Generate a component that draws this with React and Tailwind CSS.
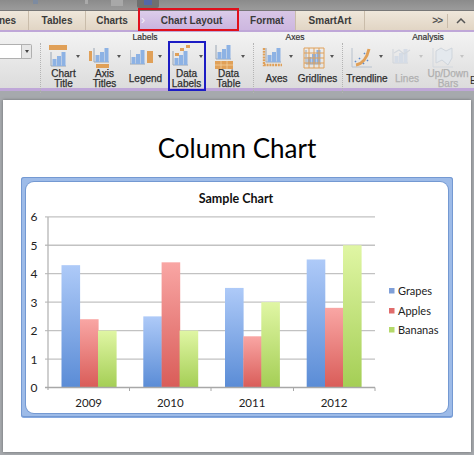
const lato = { fontFamily: "Lato, sans-serif" };

const series = [
  { id: "blue", values: [4.3, 2.5, 3.5, 4.5], xs: [61.5, 143.3, 225, 306.7] },
  { id: "red", values: [2.4, 4.4, 1.8, 2.8], xs: [80, 161.6, 243.3, 325] },
  { id: "green", values: [2, 2, 3, 5], xs: [98, 179.6, 261.3, 343] },
];

function ColumnChart() {
  // coordinates are page pixels, shifted into the frame's content box
  const y = (v) => 387.5 - v * 28.45;
  return (
    <svg width="422" height="231" viewBox="26 182 422 231" className="block">
      <defs>
        <linearGradient id="blue" x1="0" y1="0" x2="0" y2="1">
          <stop offset="0" stopColor="#aecaf8" />
          <stop offset="1" stopColor="#5a8cd6" />
        </linearGradient>
        <linearGradient id="red" x1="0" y1="0" x2="0" y2="1">
          <stop offset="0" stopColor="#f9a6a4" />
          <stop offset="1" stopColor="#d95c58" />
        </linearGradient>
        <linearGradient id="green" x1="0" y1="0" x2="0" y2="1">
          <stop offset="0" stopColor="#e0f6a4" />
          <stop offset="1" stopColor="#a4ce55" />
        </linearGradient>
      </defs>
      <text x="236" y="203" textAnchor="middle" fontSize="12.5" fontWeight="700" fill="#111" style={lato}>
        Sample Chart
      </text>
      {[1, 2, 3, 4, 5, 6].map((v) => (
        <line key={v} x1="45" x2="375" y1={y(v)} y2={y(v)} stroke="#c2c2c2" strokeWidth="1.3" />
      ))}
      {[0, 1, 2, 3, 4, 5, 6].map((v) => (
        <text key={v} x="34" y={y(v) + 4.5} textAnchor="middle" fontSize="12" fill="#222" style={lato}>
          {v}
        </text>
      ))}
      {series.map((s) =>
        s.values.map((v, i) => (
          <rect key={s.id + i} x={s.xs[i]} y={y(v)} width="18.6" height={v * 28.45} fill={`url(#${s.id})`} />
        ))
      )}
      <line x1="48" x2="48" y1="217" y2="390" stroke="#b5b5b5" strokeWidth="1.3" />
      <line x1="45" x2="375" y1="387.5" y2="387.5" stroke="#a8a8a8" strokeWidth="1.3" />
      {[129.5, 211, 293.5, 375].map((x) => (
        <line key={x} x1={x} x2={x} y1="387.5" y2="391" stroke="#a8a8a8" strokeWidth="1" />
      ))}
      {[
        ["2009", 88.7],
        ["2010", 170.3],
        ["2011", 252],
        ["2012", 334],
      ].map(([t, x]) => (
        <text key={t} x={x} y="407" textAnchor="middle" fontSize="11.5" fill="#222" style={lato}>
          {t}
        </text>
      ))}
      {[
        ["Grapes", 291, "#7f9fd8"],
        ["Apples", 311, "#e06c6c"],
        ["Bananas", 330, "#b4d96a"],
      ].map(([t, ly, c]) => (
        <g key={t}>
          <rect x="389" y={ly - 3} width="5.5" height="5.5" fill={c} />
          <text x="398" y={ly + 4} fontSize="11" fill="#222" style={lato}>
            {t}
          </text>
        </g>
      ))}
    </svg>
  );
}

function Bars({ x = 5, y = 7, muted }) {
  const c = muted ? "#d5dce6" : "#8db2e4";
  return (
    <g>
      <path d={`M${x} ${y}v14h15`} fill="none" stroke={muted ? "#cfd4da" : "#9aa6b4"} strokeWidth="1" />
      <rect x={x + 1.5} y={y + 7} width="4" height="7" fill={c} />
      <rect x={x + 6} y={y + 4} width="4" height="10" fill={c} />
      <rect x={x + 10.5} y={y} width="4" height="14" fill={c} />
    </g>
  );
}

const orange = "#e0a058";

const icons = {
  title: (
    <>
      <rect x="1" y="0" width="18" height="5" fill={orange} />
      <Bars x={3} y={7} />
    </>
  ),
  axis: (
    <>
      <rect x="0" y="6" width="3" height="10" fill={orange} />
      <Bars x={5} y={3} />
      <rect x="7" y="19" width="13" height="4" fill={orange} />
    </>
  ),
  legend: (
    <>
      <Bars x={0} y={5} />
      <rect x="17" y="6" width="6" height="12" fill={orange} />
    </>
  ),
  labels: (
    <>
      <rect x="15" y="0" width="4" height="3" fill={orange} />
      <rect x="9" y="3" width="4" height="3" fill={orange} />
      <rect x="4" y="8" width="4" height="3" fill={orange} />
      <Bars x={2} y={6} />
    </>
  ),
  table: (
    <>
      <Bars x={3} y={0} />
      <rect x="2" y="16" width="18" height="8" fill={orange} />
      <path d="M2 20h18M8 16v8M14 16v8" stroke="#f4d6a8" strokeWidth="0.7" />
    </>
  ),
  axes: (
    <>
      <Bars x={5} y={3} />
      <path d="M3 3v17h18" fill="none" stroke={orange} strokeWidth="2.4" strokeDasharray="2 0.8" />
    </>
  ),
  grid: (
    <>
      <Bars x={4} y={5} />
      <path d="M2 3h20M2 8h20M2 13h20M2 18h20M2 23h20M2 3v20M7 3v20M12 3v20M17 3v20M22 3v20" fill="none" stroke={orange} strokeWidth="1" />
    </>
  ),
  trend: (
    <>
      <path d="M1 3v19h20" fill="none" stroke="#b8c2ce" strokeWidth="1" />
      <path d="M5 20C11 19 16 13 18 4" fill="none" stroke={orange} strokeWidth="3" />
      <path d="M4 16l1 1M8 13l1 1M12 18l1 1M16 15l1 1M13 8l1 1" stroke="#5d88c8" strokeWidth="1.6" />
    </>
  ),
  lines: (
    <>
      <Bars x={2} y={4} muted />
      <path d="M3 8l5 -3l5 4l6 -4" fill="none" stroke="#d3d8de" strokeWidth="1.2" />
    </>
  ),
  updown: (
    <>
      <path d="M1 3v19h20" fill="none" stroke="#d3d8de" strokeWidth="1" />
      <path d="M4 6l5 -3l5 3l6 -3v10l-4 7l-6 -5l-6 3z" fill="#e4e9ee" stroke="#cfd5dc" strokeWidth="1" />
    </>
  ),
};

function RibbonButton({ icon, label, w, muted, selected }) {
  return (
    <div className="relative flex flex-col items-center shrink-0 h-[46px]" style={{ width: w }}>
      <div className="flex items-center gap-[4px] h-[25px] mt-px">
        <svg width="24" height="24" viewBox="0 0 24 24" className="block">
          {icons[icon]}
        </svg>
        <span
          className={`w-0 h-0 border-x-[2.5px] border-x-transparent border-t-[3px] ${muted ? "border-t-[#c4c4c4]" : "border-t-[#555]"}`}
        />
      </div>
      <div
        className={`flex-1 flex items-center text-center text-[10px] leading-[10px] [-webkit-text-stroke:0.25px] ${muted ? "text-[#b0b0b0]" : "text-[#2e2e2e]"}`}
      >
        <span>{label}</span>
      </div>
      {selected && <span className="absolute left-[2px] right-[1px] -top-[2px] -bottom-[2px] border-[2.5px] border-[#1c1cc4]" />}
    </div>
  );
}

function Tab({ w, children, purple, active, last }) {
  const bg = active
    ? "bg-gradient-to-b from-[#dccdea] to-[#c9b2de]"
    : purple
      ? "bg-gradient-to-b from-[#d8c6e6] to-[#cdb7e0]"
      : "bg-gradient-to-b from-[#efe7db] to-[#e1d5c4]";
  return (
    <div
      className={`relative shrink-0 h-full flex items-center justify-center text-[10px] font-bold text-[#3b3b3b] ${bg} ${last ? "" : "border-r border-[#c9bcaa]"}`}
      style={{ width: w }}
    >
      {children}
    </div>
  );
}

function Sep() {
  return <div className="w-0 h-[50px] shrink-0 border-l border-dotted border-[#b4b4b4]" />;
}

function GroupTitle({ w, children }) {
  return (
    <div className="text-center text-[8.5px] text-[#333] [-webkit-text-stroke:0.2px] shrink-0" style={{ width: w }}>
      {children}
    </div>
  );
}

function Handle({ className }) {
  return <span className={`absolute w-[5px] h-[5px] bg-[radial-gradient(#5f7fb2_35%,transparent_40%)] bg-[length:2px_2px] ${className}`} />;
}

export default function App() {
  return (
    <div className="w-[474px] h-[455px] overflow-hidden bg-[#a6a9ad] flex flex-col" style={{ fontFamily: "'Liberation Sans', Arial, sans-serif" }}>
      {/* window top */}
      <div className="h-[11px] shrink-0 bg-gradient-to-b from-[#8b8b8b] to-[#9b9b9b] border-b border-[#777] flex items-start">
        <div className="ml-[33px] w-[5px] h-[4px] bg-[#7d8ba0]" />
        <div className="ml-[47px] w-[3px] h-[4px] bg-[#aaa]" />
        <div className="ml-[23px] w-[12px] h-[6px] bg-[#a8a8a8]" />
        <div className="ml-[14px] w-[22px] h-[8px] rounded-b-[2px] bg-[#6f6f6f] flex justify-center">
          <div className="w-[8px] h-[5px] bg-[#5468a8]" />
        </div>
      </div>

      {/* tabs */}
      <div className="h-[19px] shrink-0 flex bg-gradient-to-b from-[#efe7db] to-[#e1d5c4]">
        <Tab w="29px">
          <span className="-ml-[13px]">nes</span>
        </Tab>
        <Tab w="57px">Tables</Tab>
        <Tab w="53px">Charts</Tab>
        <Tab w="100px" active>
          <span className="absolute left-[2px] top-[3px] text-[#f4f0f8] font-normal text-[12px] leading-[12px]">›</span>
          <span className="ml-[6px]">Chart Layout</span>
          <span className="absolute -left-[1px] -top-[3px] -right-[1px] -bottom-[1px] border-[2.5px] border-[#e0101c]" />
        </Tab>
        <Tab w="57px" purple>
          Format
        </Tab>
        <Tab w="69px">SmartArt</Tab>
        <div className="flex-1 flex items-center justify-end text-[#555] font-bold text-[10px]">
          <span className="pr-[5px] border-r border-[#c9bcaa] leading-[14px] tracking-[-1px]">&gt;&gt;</span>
          <svg width="10" height="6" viewBox="0 0 10 6" className="mx-[8px]">
            <path d="M1 5l4-4l4 4" fill="none" stroke="#555" strokeWidth="1.5" />
          </svg>
        </div>
      </div>

      {/* ribbon */}
      <div className="h-[61px] shrink-0 bg-gradient-to-b from-[#f3f3f3] to-[#dcdcdc] border-t-2 border-b-[3px] border-[#bfa7d8] flex flex-col">
        <div className="h-[11px] flex leading-[11px]">
          <div className="w-[126px] shrink-0" />
          <GroupTitle w="38px">Labels</GroupTitle>
          <div className="w-[112px] shrink-0" />
          <GroupTitle w="38px">Axes</GroupTitle>
          <div className="w-[95px] shrink-0" />
          <GroupTitle w="38px">Analysis</GroupTitle>
        </div>
        <div className="flex items-start flex-1">
          <div className="w-[32px] h-[15px] mt-px shrink-0 flex bg-white border-y border-r border-[#b0b0b0] rounded-r-[2px]">
            <div className="ml-auto w-[10px] h-full flex items-center justify-center bg-[#e6e6e6] border-l border-[#b5b5b5]">
              <span className="w-0 h-0 border-x-[2.5px] border-x-transparent border-t-[3px] border-t-[#444]" />
            </div>
          </div>
          <div className="w-[8px] shrink-0" />
          <Sep />
          <div className="w-[2px] shrink-0" />
          <RibbonButton icon="title" label={<>Chart<br />Title</>} w="41px" />
          <RibbonButton icon="axis" label={<>Axis<br />Titles</>} w="41px" />
          <RibbonButton icon="legend" label="Legend" w="41px" />
          <RibbonButton icon="labels" label={<>Data<br />Labels</>} w="41px" selected />
          <RibbonButton icon="table" label={<>Data<br />Table</>} w="43px" />
          <div className="w-[3px] shrink-0" />
          <Sep />
          <div className="w-[2px] shrink-0" />
          <RibbonButton icon="axes" label="Axes" w="41px" />
          <RibbonButton icon="grid" label="Gridlines" w="41px" />
          <div className="w-[4px] shrink-0" />
          <Sep />
          <div className="w-[4px] shrink-0" />
          <RibbonButton icon="trend" label="Trendline" w="40px" />
          <RibbonButton icon="lines" label="Lines" w="40px" muted />
          <RibbonButton icon="updown" label={<>Up/Down<br />Bars</>} w="42px" muted />
          <span className="text-[10px] text-[#2e2e2e] mt-[30px] ml-[1px]">E</span>
        </div>
      </div>

      {/* slide */}
      <div className="flex-1 pt-[9px] px-[3px] pb-[3px] min-h-0">
        <div className="h-full bg-white flex flex-col items-center shadow-[0_0_3px_rgba(0,0,0,0.35)]">
          <h1 className="mt-[29px] h-[38px] text-[26px] leading-[38px] text-black" style={lato}>
            Column Chart
          </h1>
          <div className="relative mt-[10px] w-[432px] h-[241px] p-[5px] rounded-[3px] bg-[#9dbbe8] border-b-[1px] border-[#86a9e0] ring-1 ring-inset ring-[#7499d2]">
            <div className="bg-white rounded-[8px] ring-1 ring-[#7499d2] h-[231px]">
              <ColumnChart />
            </div>
            <Handle className="left-px top-px" />
            <Handle className="right-px top-px" />
            <Handle className="left-px bottom-px" />
            <Handle className="right-px bottom-px" />
            <Handle className="left-[205px] top-0" />
            <Handle className="left-[205px] bottom-0" />
            <Handle className="left-0 top-[113px]" />
            <Handle className="right-0 top-[113px]" />
          </div>
        </div>
      </div>
    </div>
  );
}
